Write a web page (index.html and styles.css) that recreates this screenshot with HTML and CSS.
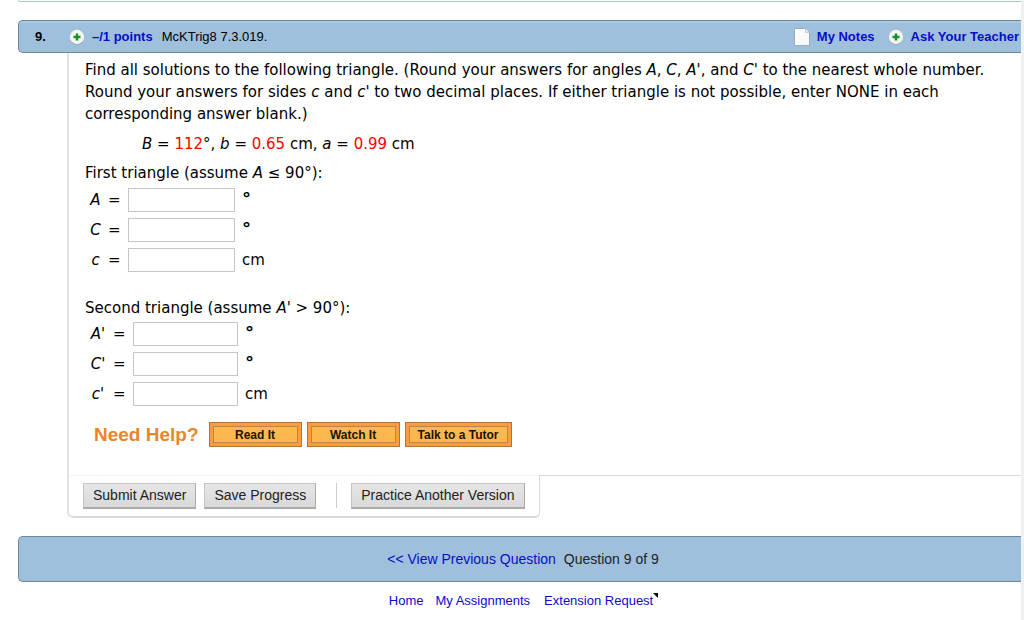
FILE: index.html
```html
<!DOCTYPE html>
<html lang="en">
<head>
<meta charset="utf-8">
<title>Question 9</title>
<link rel="stylesheet" href="styles.css">
</head>
<body>
<div class="page">
  <div class="previous-card"></div>

  <header class="question-bar">
    <span class="number">9.</span>
    <svg class="plus" viewBox="0 0 16 16" aria-hidden="true"><circle cx="8" cy="8.600" r="7.200" fill="#8197a8"/><circle cx="8" cy="8" r="7.200" fill="#f5f5f3"/><path d="M8 4.500v7M4.500 8h7" stroke="#16912a" stroke-width="2.400"/></svg>
    <a class="bar-link" href="#points">–/1 points</a>
    <span class="code">McKTrig8 7.3.019.</span>
    <div class="bar-tools">
      <svg class="note" viewBox="0 0 16 18" aria-hidden="true"><path d="M.5.5h11l4 4v13H.5z" fill="#fafafa" stroke="#9aacb8"/><path d="M11.500.5v4h4" fill="#e4e8eb" stroke="#c3ccd2"/></svg>
      <a class="bar-link" href="#notes">My Notes</a>
      <svg class="plus teacher-plus" viewBox="0 0 16 16" aria-hidden="true"><circle cx="8" cy="8.600" r="7.200" fill="#8197a8"/><circle cx="8" cy="8" r="7.200" fill="#f5f5f3"/><path d="M8 4.500v7M4.500 8h7" stroke="#16912a" stroke-width="2.400"/></svg>
      <a class="bar-link" href="#teacher">Ask Your Teacher</a>
    </div>
  </header>

  <main class="question">
    <div class="content">
      <p class="prompt">Find all solutions to the following triangle. (Round your answers for angles <i>A</i>, <i>C</i>, <i>A'</i>, and <i>C'</i> to the nearest whole number.<br>Round your answers for sides <i>c</i> and <i>c'</i> to two decimal places. If either triangle is not possible, enter NONE in each<br>corresponding answer blank.)</p>
      <p class="given"><i>B</i> = <span class="value">112</span>°, <i>b</i> = <span class="value">0.65</span> cm, <i>a</i> = <span class="value">0.99</span> cm</p>

      <p class="triangle-title">First triangle (assume <i>A</i> ≤ 90°):</p>
      <div class="answers">
        <label for="a1"><i>A</i></label><span>=</span><input id="a1" type="text"><span class="degree">°</span>
        <label for="c1"><i>C</i></label><span>=</span><input id="c1" type="text"><span class="degree">°</span>
        <label for="s1"><i>c</i></label><span>=</span><input id="s1" type="text"><span>cm</span>
      </div>

      <p class="triangle-title second">Second triangle (assume <i>A'</i> &gt; 90°):</p>
      <div class="answers prime">
        <label for="a2"><i>A'</i></label><span>=</span><input id="a2" type="text"><span class="degree">°</span>
        <label for="c2"><i>C'</i></label><span>=</span><input id="c2" type="text"><span class="degree">°</span>
        <label for="s2"><i>c'</i></label><span>=</span><input id="s2" type="text"><span>cm</span>
      </div>

      <div class="help">
        <span class="help-title">Need Help?</span>
        <button class="help-button" type="button">Read It</button>
        <button class="help-button" type="button">Watch It</button>
        <button class="help-button tutor" type="button">Talk to a Tutor</button>
      </div>
    </div>
    <div class="actions-row">
      <div class="actions">
        <button class="action" type="button">Submit Answer</button>
        <button class="action" type="button">Save Progress</button>
        <span class="separator"></span>
        <button class="action" type="button">Practice Another Version</button>
      </div>
      <div class="actions-rest"></div>
    </div>
  </main>

  <nav class="pager">
    <a href="#previous">&lt;&lt; View Previous Question</a>
    <span>Question 9 of 9</span>
  </nav>

  <footer class="footer">
    <a href="#home">Home</a>
    <a href="#assignments">My Assignments</a>
    <a class="extension" href="#extension">Extension Request<svg class="corner" viewBox="0 0 5 5" aria-hidden="true"><path d="M0 0h5v5L3.500 3.500z" fill="#000"/></svg></a>
  </footer>
</div>
</body>
</html>
```
FILE: styles.css
```css
* { box-sizing: border-box; }

body {
  margin: 0;
  background: #fff;
  color: #000;
  font-family: "Liberation Sans", Arial, sans-serif;
  font-size: 14px;
}

a { color: #0b0bc9; text-decoration: none; }
p { margin: 0; }

.page {
  min-height: 100vh;
  padding-left: 18px;
  border-right: 3px solid #f0f0f0;
  overflow: hidden;
}

.previous-card {
  height: 2px;
  border-bottom: 1px solid #a9c5da;
  border-left: 1px solid #a9c5da;
  border-bottom-left-radius: 4px;
}

.question-bar {
  display: flex;
  align-items: center;
  height: 33px;
  margin-top: 18px;
  padding: 0 2px 0 16px;
  border: 1px solid #6b8799;
  border-right: 0;
  border-radius: 5px 0 0 5px;
  background: #9ec0dc;
  box-shadow: inset 0 3px 0 -1px #a9c8e1;
  font-size: 13px;
  white-space: nowrap;
}

.number { width: 34px; font-weight: bold; }
.plus { width: 16px; height: 16px; }
.bar-link { margin-left: 7px; font-weight: bold; }
.code { margin-left: 9px; }
.bar-tools { display: flex; align-items: center; margin-left: auto; }
.note { width: 16px; height: 18px; }
.teacher-plus { margin-left: 13px; }

.question {
  margin-left: 49px;
  border-left: 2px solid #e2e2e2;
  border-bottom-left-radius: 5px;
}

.content {
  padding: 6px 0 28px 16px;
  font-family: Verdana, "DejaVu Sans", sans-serif;
  font-size: 15px;
  line-height: 22px;
  white-space: nowrap;
}

.given { margin: 8px 0 7px; padding-left: 57px; }
.value { color: #f00; }

.answers {
  display: grid;
  grid-template-columns: 11px 13px 107px 30px;
  grid-auto-rows: 24px;
  gap: 6px 7px;
  align-items: center;
  margin-top: 4px;
  padding-left: 5px;
}

.answers.prime { grid-template-columns: 16px 13px 105px 30px; }
.answers label { text-align: center; }
.degree { align-self: start; font-size: 18px; font-weight: bold; line-height: 22px; }

.answers input {
  width: 100%;
  height: 24px;
  border: 1px solid #c6c6c6;
  background: #fff;
  font: inherit;
}

.second { margin-top: 25px; }
.second + .answers { margin-top: 3px; }

.help {
  display: flex;
  align-items: center;
  gap: 5px;
  margin-top: 16px;
  padding-left: 9px;
  font-family: "Liberation Sans", Arial, sans-serif;
}

.help-title { margin-right: 5px; color: #ea8528; font-size: 19px; font-weight: bold; }

.help-button {
  width: 93px;
  height: 25px;
  padding: 0;
  border: 1px solid #b9713a;
  background: #fbb84f;
  box-shadow: inset 0 0 0 3px #fb9c40, inset 0 0 0 4px #bd8545, inset 0 4px 0 #f6c79b;
  color: #1c1200;
  font: bold 12px "Liberation Sans", Arial, sans-serif;
}

.tutor { width: 107px; }

.actions-row { display: flex; }

.actions {
  display: flex;
  align-items: center;
  height: 43px;
  padding: 0 14px;
  border: solid #dadada;
  border-width: 0 1px 2px 0;
  border-radius: 0 0 5px 5px;
  box-shadow: inset 0 1px 0 #f3f3f3;
}

.actions-rest { flex: 1; border-top: 1px solid #d8d8d8; }

.action {
  height: 26px;
  padding: 0 9px;
  border: 1px solid #c4c4c4;
  border-right-color: #a9a9a9;
  border-bottom: 2px solid #aaa;
  background: linear-gradient(#e6e6e6, #d9d9d9);
  color: #222;
  font: 14px "Liberation Sans", Arial, sans-serif;
}

.action + .action { margin-left: 8px; }
.separator { width: 1px; height: 25px; margin: 0 14px 0 20px; background: #ccc; }

.pager {
  display: flex;
  align-items: center;
  justify-content: center;
  gap: 8px;
  height: 46px;
  margin-top: 18px;
  padding-left: 6px;
  border: 1px solid #6b8799;
  border-right: 0;
  border-radius: 5px 0 0 5px;
  background: #9ec0dc;
  color: #222;
}

.footer {
  display: flex;
  justify-content: center;
  gap: 12px;
  padding: 11px 0 0 8px;
  font-size: 13px;
}

.extension { margin-left: 2px; }
.corner { width: 5px; height: 5px; vertical-align: top; }
```
